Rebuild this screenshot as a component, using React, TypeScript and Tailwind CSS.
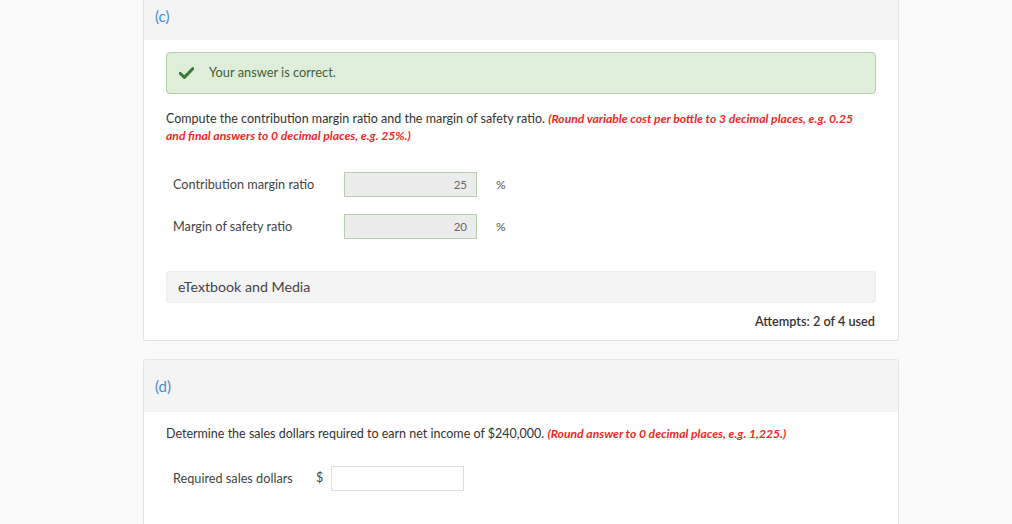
import React from "react";

function Check() {
  return (
    <svg width="15" height="12" viewBox="0 0 15 12" className="shrink-0">
      <path d="M1.2 6.4 L5.4 10.4 L13.8 1.6" fill="none" stroke="#3e7b3a" strokeWidth="3" strokeLinecap="round" strokeLinejoin="round" />
    </svg>
  );
}

function RatioRow({ label, value }: { label: string; value: string }) {
  return (
    <div className="flex items-center h-[25px]">
      <div className="w-[178px] pl-[7px] text-[12.7px] text-[#444]">{label}</div>
      <div className="w-[133px] h-[25px] bg-[#ececec] border border-[#b8ccb0] flex items-center justify-end pr-[9px] text-[11.5px] text-[#666]">
        {value}
      </div>
      <div className="pl-[19px] text-[12px] text-[#555]">%</div>
    </div>
  );
}

export default function App() {
  return (
    <div className="w-[1012px] h-[524px] overflow-hidden bg-[#fafafa] font-['Lato','Liberation_Sans',sans-serif]">
      <div className="ml-[143px] w-[756px] flex flex-col">
        {/* part (c) */}
        <section className="bg-white border border-t-0 border-[#e4e4e4] rounded-b-[3px]">
          <div className="h-[40px] bg-[#f4f4f4] pl-[11px] pt-[5px] text-[15px] text-[#4b8ac3]">(c)</div>
          <div className="px-[22px] pt-[12px] pb-[9px]">
            <div className="h-[42px] bg-[#dfeed8] border border-[#b3cfa9] rounded-[4px] flex items-center pl-[12px] gap-[15px]">
              <Check />
              <span className="text-[12.8px] text-[#3f5f3a]">Your answer is correct.</span>
            </div>
            <p className="mt-[16px] pr-[12px] text-[12.5px] leading-[17px] text-[#333]">
              Compute the contribution margin ratio and the margin of safety ratio.{" "}
              <em className="font-bold text-[12.15px] text-[#ee2a24]">
                (Round variable cost per bottle to 3 decimal places, e.g. 0.25 and final answers to 0 decimal places, e.g. 25%.)
              </em>
            </p>
            <div className="mt-[28px] flex flex-col gap-[17px]">
              <RatioRow label="Contribution margin ratio" value="25" />
              <RatioRow label="Margin of safety ratio" value="20" />
            </div>
            <div className="mt-[32px] h-[32px] bg-[#f4f4f4] border border-[#ececec] rounded-[3px] flex items-center pl-[11px] text-[14.2px] text-[#444]">
              eTextbook and Media
            </div>
            <div className="mt-[9px] pr-[1px] text-right text-[12.7px] font-semibold text-[#333]">Attempts: 2 of 4 used</div>
          </div>
        </section>

        {/* part (d) */}
        <section className="mt-[18px] bg-white border border-[#e4e4e4] rounded-t-[3px] h-[200px]">
          <div className="h-[52px] bg-[#f4f4f4] pl-[11px] flex items-center text-[15px] text-[#4b8ac3]">(d)</div>
          <div className="px-[22px] pt-[13px]">
            <p className="text-[12.5px] leading-[17px] text-[#333]">
              Determine the sales dollars required to earn net income of $240,000.{" "}
              <em className="font-bold text-[12.15px] text-[#ee2a24]">(Round answer to 0 decimal places, e.g. 1,225.)</em>
            </p>
            <div className="mt-[24px] flex items-center h-[25px]">
              <div className="w-[150px] pl-[7px] text-[12.7px] text-[#444]">Required sales dollars</div>
              <div className="w-[15px] text-[12.5px] text-[#444]">$</div>
              <div className="w-[133px] h-[25px] bg-white border border-[#dedede]"></div>
            </div>
          </div>
        </section>
      </div>
    </div>
  );
}
